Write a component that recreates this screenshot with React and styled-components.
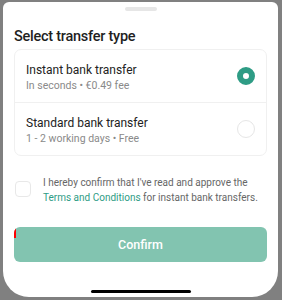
import React from 'react';
import styled, { createGlobalStyle } from 'styled-components';

const Global = createGlobalStyle`
	html, body {
		margin: 0;
		padding: 0;
		background: #808080;
	}
	body {
		font-family: Roboto, 'Noto Sans', sans-serif;
		-webkit-font-smoothing: antialiased;
	}
`;

const options = [
	{ title: 'Instant bank transfer', sub: 'In seconds • €0.49 fee', selected: true },
	{ title: 'Standard bank transfer', sub: '1 - 2 working days • Free', selected: false },
];

const App = () => {
	return (
		<>
			<Global />
			<Screen>
				<Sheet>
					<Handle />
					<Title>Select transfer type</Title>
					<OptionList>
						{options.map((o) => (
							<Option key={o.title}>
								<OptionText>
									<OptionTitle>{o.title}</OptionTitle>
									<OptionSub>{o.sub}</OptionSub>
								</OptionText>
								<Radio selected={o.selected} />
							</Option>
						))}
					</OptionList>
					<Consent>
						<Checkbox />
						<ConsentText>
							I hereby confirm that I've read and approve the <Link>Terms and Conditions</Link> for
							instant bank transfers.
						</ConsentText>
					</Consent>
					<Button>
						<Marker />
						Confirm
					</Button>
					<HomeBar />
				</Sheet>
			</Screen>
		</>
	);
};

export default App;

const Screen = styled.div`
	width: 282px;
	height: 300px;
	padding: 2px 4px 3px 3px;
	box-sizing: border-box;
	display: flex;
`;

const Sheet = styled.section`
	flex: 1;
	background: #fff;
	border-radius: 6px 6px 26px 26px;
	padding: 0 11px 0 11px;
	display: flex;
	flex-direction: column;
	align-items: stretch;
`;

const Handle = styled.div`
	align-self: center;
	width: 32px;
	height: 4px;
	border-radius: 2px;
	background: #e6e6e6;
	margin-top: 5px;
`;

const Title = styled.h2`
	margin: 17px 0 0;
	font-size: 14.5px;
	font-weight: 500;
	color: #1f1f1f;
	letter-spacing: -0.25px;
	line-height: 18px;
`;

const OptionList = styled.div`
	margin-top: 3px;
	border: 1px solid #f0f0f0;
	border-radius: 7px;
	display: flex;
	flex-direction: column;
`;

const Option = styled.div`
	height: 52px;
	display: flex;
	align-items: center;
	justify-content: space-between;
	padding: 0 11px 0 11px;
	& + & {
		border-top: 1px solid #f0f0f0;
	}
`;

const OptionText = styled.div`
	display: flex;
	flex-direction: column;
	gap: 1px;
	margin-top: 3px;
`;

const OptionTitle = styled.span`
	font-size: 12px;
	color: #222;
	line-height: 15px;
`;

const OptionSub = styled.span`
	font-size: 10.5px;
	color: #8a8a8a;
	line-height: 14px;
`;

const Radio = styled.span`
	width: 18px;
	height: 18px;
	border-radius: 50%;
	box-sizing: border-box;
	flex-shrink: 0;
	border: ${(p) => (p.selected ? '6px solid #2e9c85' : '1px solid #e6e6e6')};
	background: #fff;
`;

const Consent = styled.label`
	margin-top: 19px;
	display: flex;
	align-items: flex-start;
	gap: 12px;
	padding-left: 1px;
`;

const Checkbox = styled.span`
	width: 16px;
	height: 16px;
	flex-shrink: 0;
	box-sizing: border-box;
	border: 1px solid #e8e8e8;
	border-radius: 4px;
	margin-top: 6px;
`;

const ConsentText = styled.p`
	margin: 0;
	font-size: 10px;
	line-height: 15px;
	color: #666;
`;

const Link = styled.span`
	color: #2e9c85;
`;

const Button = styled.button`
	position: relative;
	margin-top: 22px;
	height: 35px;
	border: none;
	border-radius: 6px;
	background: #82c4b0;
	color: #fff;
	font-family: Roboto, 'Noto Sans', sans-serif;
	font-size: 12.5px;
	font-weight: 500;
	overflow: hidden;
`;

const Marker = styled.span`
	position: absolute;
	left: 0;
	top: 1px;
	width: 2px;
	height: 10px;
	background: #ff0000;
`;

const HomeBar = styled.div`
	align-self: center;
	width: 100px;
	height: 3px;
	border-radius: 2px;
	background: #000;
	margin-top: auto;
	margin-bottom: 4px;
`;
